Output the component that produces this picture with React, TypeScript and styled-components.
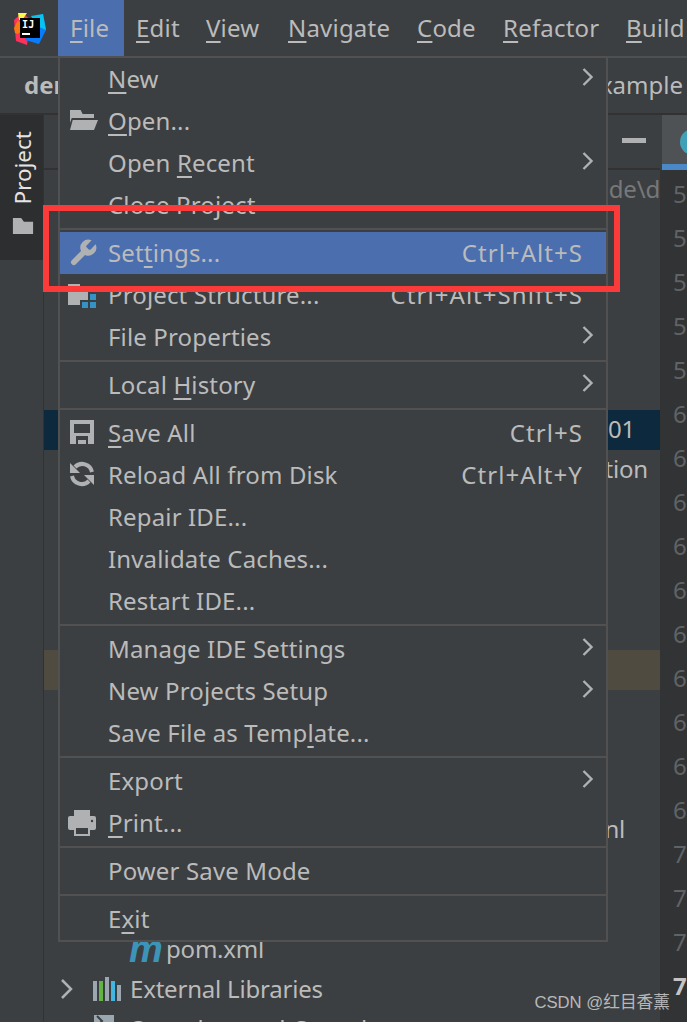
import React from "react";
import styled, { createGlobalStyle } from "styled-components";

const Global = createGlobalStyle`
  html, body { margin: 0; padding: 0; background: #3c3f41; }
  * { box-sizing: border-box; }
`;

const FONT = `"Noto Sans", "Open Sans", "Liberation Sans", sans-serif`;

const Page = styled.div`
  position: relative;
  width: 687px;
  height: 1022px;
  overflow: hidden;
  display: flex;
  flex-direction: column;
  background: #3c3f41;
  color: #bbbbbb;
  font-family: ${FONT};
  font-size: 24px;
`;

const MenuBar = styled.div`
  height: 58px;
  flex: none;
  display: flex;
  align-items: stretch;
  border-bottom: 2px solid #4d4f51;
  white-space: nowrap;
  letter-spacing: 0.2px;
`;

const LogoSlot = styled.div`
  width: 58px;
  flex: none;
  display: flex;
  align-items: flex-start;
  padding: 12px 0 0 13px;
`;

const TopItem = styled.div<{ $active?: boolean; $width: number }>`
  width: ${(p) => p.$width}px;
  flex: none;
  display: flex;
  align-items: center;
  padding: 0 0 1px 12px;
  background: ${(p) => (p.$active ? "#4b6eaf" : "transparent")};
`;

const Mnemonic = styled.span`
  text-decoration: underline;
  text-decoration-thickness: 2px;
  text-underline-offset: 4px;
  text-decoration-skip-ink: none;
`;

const NavBar = styled.div`
  height: 57px;
  flex: none;
  display: flex;
  align-items: center;
  justify-content: space-between;
  padding: 0 4px 3px 24px;
  border-bottom: 2px solid #323232;
  white-space: nowrap;
`;

const Crumb = styled.span<{ $bold?: boolean }>`
  font-weight: ${(p) => (p.$bold ? 700 : 400)};
`;

const Body = styled.div`
  flex: 1;
  min-height: 0;
  display: flex;
`;

const Stripe = styled.div`
  width: 44px;
  flex: none;
  border-right: 1px solid #323232;
`;

const ProjectTab = styled.div`
  height: 145px;
  background: #2c2e2f;
  display: flex;
  flex-direction: column-reverse;
  align-items: center;
  justify-content: flex-start;
  padding: 16px 0 26px 2px;
  gap: 13px;
  color: #e4e4e4;
`;

const VerticalLabel = styled.span`
  writing-mode: vertical-rl;
  transform: rotate(180deg);
  font-size: 22.5px;
  line-height: 24px;
`;

const TreePanel = styled.div`
  flex: 1;
  min-width: 0;
  display: flex;
  flex-direction: column;
`;

const PanelHeader = styled.div`
  height: 55px;
  flex: none;
  display: flex;
  align-items: center;
  justify-content: flex-end;
  padding: 0 14px 2px 0;
  border-bottom: 2px solid #323232;
`;

const MinimizeBar = styled.div`
  width: 24px;
  height: 5px;
  background: #afb1b3;
`;

const Tree = styled.div`
  flex: 1;
  min-height: 0;
  overflow: hidden;
  letter-spacing: -0.2px;
`;

const TreeRow = styled.div<{ $tone?: "selected" | "warm"; $pad?: number; $end?: number; $muted?: boolean }>`
  height: 40px;
  display: flex;
  align-items: center;
  white-space: nowrap;
  justify-content: ${(p) => (p.$end !== undefined ? "flex-end" : "flex-start")};
  padding-left: ${(p) => p.$pad ?? 0}px;
  padding-right: ${(p) => p.$end ?? 0}px;
  padding-bottom: 3px;
  color: ${(p) => (p.$muted ? "#787878" : "#bbbbbb")};
  background: ${(p) =>
    p.$tone === "selected" ? "#0d293e" : p.$tone === "warm" ? "#4f4b41" : "transparent"};
`;

const RowSpacer = styled.div<{ $rows: number }>`
  height: ${(p) => p.$rows * 40}px;
`;

const PomGlyph = styled.span`
  font-family: "Liberation Sans", sans-serif;
  font-weight: 700;
  font-style: italic;
  font-size: 38px;
  line-height: 40px;
  color: #3d94b8;
  width: 37px;
  flex: none;
`;

const TreeChevron = styled.svg`
  width: 13px;
  height: 22px;
  flex: none;
  margin-right: 20px;
`;

const TreeIcon = styled.svg`
  width: 28px;
  height: 28px;
  flex: none;
  margin-right: 9px;
`;

const EditorPane = styled.div`
  width: 27px;
  flex: none;
  display: flex;
  flex-direction: column;
  overflow: hidden;
`;

const FileTab = styled.div`
  height: 55px;
  flex: none;
  margin-left: 2px;
  background: #4e5254;
  border-bottom: 6px solid #4a88c7;
  overflow: hidden;
  padding: 14px 0 0 18px;
`;

const TabDot = styled.div`
  width: 26px;
  height: 26px;
  border-radius: 50%;
  background: #40a0b8;
`;

const Gutter = styled.div`
  flex: 1;
  min-height: 0;
  background: #313335;
  overflow: hidden;
  padding: 2px 0 0 13px;
`;

const LineNo = styled.div<{ $current?: boolean }>`
  height: 44px;
  line-height: 44px;
  color: ${(p) => (p.$current ? "#c4c4c4" : "#606366")};
  font-weight: ${(p) => (p.$current ? 700 : 400)};
`;

const Menu = styled.div`
  position: absolute;
  left: 58px;
  top: 56px;
  width: 550px;
  background: #3c3f41;
  border: 2px solid #515151;
  white-space: nowrap;
`;

const Item = styled.div<{ $selected?: boolean }>`
  height: 42px;
  display: flex;
  align-items: center;
  background: ${(p) => (p.$selected ? "#4b6eaf" : "transparent")};
`;

const IconSlot = styled.div`
  width: 48px;
  height: 32px;
  flex: none;
  padding-left: 7px;
`;

const IconSvg = styled.svg`
  display: block;
  width: 32px;
  height: 32px;
`;

const ItemText = styled.div`
  padding-bottom: 2px;
  letter-spacing: 0.15px;
`;

const Shortcut = styled.span`
  margin-left: auto;
  margin-right: 23px;
  padding-bottom: 2px;
  letter-spacing: 1.05px;
`;

const Arrow = styled.svg`
  margin-left: auto;
  margin-right: 12px;
  margin-bottom: 4px;
  width: 12px;
  height: 18px;
  flex: none;
`;

const Separator = styled.div`
  height: 6px;
  display: flex;
  align-items: center;
  &::before {
    content: "";
    width: 100%;
    height: 2px;
    background: #515151;
  }
`;

const Highlight = styled.div`
  position: absolute;
  left: 43px;
  top: 205px;
  width: 577px;
  height: 87px;
  border: 6px solid #fb3a3a;
  pointer-events: none;
`;

const Watermark = styled.div`
  position: absolute;
  right: 17px;
  top: 992px;
  font-family: "Liberation Sans", "Noto Sans CJK SC", sans-serif;
  font-size: 16.7px;
  line-height: 22px;
  color: #c6c6c6;
  opacity: 0.9;
  white-space: nowrap;
`;

const Label = ({ text }: { text: string }) => {
  const i = text.indexOf("_");
  if (i < 0) return <span>{text}</span>;
  return (
    <span>
      {text.slice(0, i)}
      <Mnemonic>{text[i + 1]}</Mnemonic>
      {text.slice(i + 2)}
    </span>
  );
};

const C = "#afb1b3";
const D = "#3c3f41";

const icons: Record<string, React.ReactNode> = {
  folder: (
    <>
      <path fill={C} d="M3 5h10.6l2 4H27v4H4.7L3 18z" />
      <path fill={C} d="M5.7 15H31l-4 10H3z" />
    </>
  ),
  wrench: (
    <g transform="scale(1.333)">
      <path
        fill={C}
        d="M14.7 6.3a1 1 0 0 0 0 1.4l1.6 1.6a1 1 0 0 0 1.4 0l3.77-3.77a6 6 0 0 1-7.94 7.94l-6.91 6.91a2.12 2.12 0 0 1-3-3l6.91-6.91a6 6 0 0 1 7.94-7.94l-3.76 3.76z"
      />
    </g>
  ),
  structure: (
    <>
      <path fill={C} d="M1 5h12v4h8v12h-8v5H1z" />
      <rect x="23" y="15" width="6" height="6" fill="#3592c4" />
      <rect x="15" y="23" width="6" height="6" fill="#3592c4" />
      <rect x="23" y="23" width="6" height="6" fill="#3592c4" />
    </>
  ),
  save: (
    <>
      <rect x="3" y="3" width="24" height="24" fill={C} />
      <rect x="7" y="7" width="16" height="9" fill={D} />
      <rect x="9" y="19" width="12" height="8" fill={D} />
      <rect x="11" y="23" width="8" height="4" fill={C} />
    </>
  ),
  reload: (
    <>
      <path fill="none" stroke={C} strokeWidth="4" d="M25 13A10 10 0 0 0 8 8" />
      <path fill={C} d="M3 4v10h10z" />
      <path fill="none" stroke={C} strokeWidth="4" d="M5 17a10 10 0 0 0 17 5" />
      <path fill={C} d="M27 26V16H17z" />
    </>
  ),
  print: (
    <>
      <rect x="7" y="3" width="16" height="6" fill={C} />
      <rect x="1" y="9" width="28" height="14" rx="2" fill={C} />
      <rect x="7" y="19" width="16" height="10" fill={C} />
      <rect x="9" y="21" width="12" height="6" fill={D} />
      <circle cx="25" cy="14" r="1.2" fill={D} />
    </>
  ),
};

type Entry =
  | "sep"
  | { label: string; icon?: string; shortcut?: string; sub?: boolean; selected?: boolean };

const entries: Entry[] = [
  { label: "_New", sub: true },
  { label: "_Open...", icon: "folder" },
  { label: "Open _Recent", sub: true },
  { label: "Close Project" },
  "sep",
  { label: "Set_tings...", icon: "wrench", shortcut: "Ctrl+Alt+S", selected: true },
  { label: "Project Structure...", icon: "structure", shortcut: "Ctrl+Alt+Shift+S" },
  { label: "File Properties", sub: true },
  "sep",
  { label: "Local _History", sub: true },
  "sep",
  { label: "_Save All", icon: "save", shortcut: "Ctrl+S" },
  { label: "Reload All from Disk", icon: "reload", shortcut: "Ctrl+Alt+Y" },
  { label: "Repair IDE..." },
  { label: "Invalidate Caches..." },
  { label: "Restart IDE..." },
  "sep",
  { label: "Manage IDE Settings", sub: true },
  { label: "New Projects Setup", sub: true },
  { label: "Save File as Temp_late..." },
  "sep",
  { label: "Export", sub: true },
  { label: "_Print...", icon: "print" },
  "sep",
  { label: "Power Save Mode" },
  "sep",
  { label: "E_xit" },
];

const top: { label: string; width: number; active?: boolean }[] = [
  { label: "_File", width: 66, active: true },
  { label: "_Edit", width: 70 },
  { label: "_View", width: 82 },
  { label: "_Navigate", width: 129 },
  { label: "_Code", width: 86 },
  { label: "_Refactor", width: 123 },
  { label: "_Build", width: 73 },
];

const lines = [
  ...Array(5).fill("5"),
  ...Array(10).fill("6"),
  ...Array(5).fill("7"),
];

const Logo = () => (
  <svg width="34" height="34" viewBox="0 0 34 34">
    <path fill="#fe315d" d="M1 8 9 1l8 6-3 26-11-4z" />
    <path fill="#f97a12" d="M1 16 5 8l6 8-6 6-3-1z" />
    <path fill="#fcf84a" d="M5 1h9l-4 6-4 1z" />
    <path fill="#087cfa" d="M16 8l14-6 3 16-7 14-14-4z" />
    <path fill="#07c3f2" d="M18 4l12-2 3 16-9-4z" />
    <rect x="7" y="6" width="20" height="20" fill="#000" />
    <text x="9" y="16" fill="#fff" fontFamily="'DejaVu Sans Mono', monospace" fontWeight="700" fontSize="10">
      IJ
    </text>
    <rect x="9" y="21" width="8" height="2" fill="#fff" />
  </svg>
);

export default function App() {
  return (
    <>
      <Global />
      <Page>
        <MenuBar>
          <LogoSlot>
            <Logo />
          </LogoSlot>
          {top.map((t) => (
            <TopItem key={t.label} $active={t.active} $width={t.width}>
              <Label text={t.label} />
            </TopItem>
          ))}
        </MenuBar>
        <NavBar>
          <Crumb $bold>demo</Crumb>
          <Crumb>xample</Crumb>
        </NavBar>
        <Body>
          <Stripe>
            <ProjectTab>
              <svg width="22" height="18" viewBox="0 0 22 18">
                <path fill={C} d="M0 0h9l3 4h10v14H0z" />
              </svg>
              <VerticalLabel>Project</VerticalLabel>
            </ProjectTab>
          </Stripe>
          <TreePanel>
            <PanelHeader>
              <MinimizeBar />
            </PanelHeader>
            <Tree>
              <TreeRow $muted $end={0}>
                de\d
              </TreeRow>
              <RowSpacer $rows={5} />
              <TreeRow $tone="selected" $end={25}>
                01
              </TreeRow>
              <TreeRow $end={12}>tion</TreeRow>
              <RowSpacer $rows={4} />
              <TreeRow $tone="warm" />
              <RowSpacer $rows={3} />
              <TreeRow $end={35}>nl</TreeRow>
              <RowSpacer $rows={2} />
              <TreeRow $pad={85}>
                <PomGlyph>m</PomGlyph>
                pom.xml
              </TreeRow>
              <TreeRow $pad={16}>
                <TreeChevron viewBox="0 0 13 22">
                  <path fill="none" stroke={C} strokeWidth="2.5" d="M2 2l9 9-9 9" />
                </TreeChevron>
                <TreeIcon viewBox="0 0 28 28">
                  <rect x="0" y="6" width="4" height="20" fill="#9aa7b0" />
                  <rect x="6" y="6" width="4" height="20" fill="#62b543" />
                  <rect x="12" y="2" width="4" height="24" fill="#9aa7b0" />
                  <rect x="18" y="6" width="4" height="20" fill="#40b6e0" />
                  <rect x="24" y="10" width="4" height="16" fill="#9aa7b0" />
                </TreeIcon>
                External Libraries
              </TreeRow>
              <TreeRow $pad={50}>
                <TreeIcon viewBox="0 0 28 28">
                  <rect x="0" y="0" width="20" height="24" fill="#9aa7b0" />
                  <path fill="none" stroke="#3c3f41" strokeWidth="2" d="M3 1l5 5-5 5" />
                </TreeIcon>
                Scratches and Consoles
              </TreeRow>
            </Tree>
          </TreePanel>
          <EditorPane>
            <FileTab>
              <TabDot />
            </FileTab>
            <Gutter>
              {lines.map((n, i) => (
                <LineNo key={i} $current={i === 18}>
                  {n}
                </LineNo>
              ))}
            </Gutter>
          </EditorPane>
        </Body>

        <Menu>
          {entries.map((e, i) =>
            e === "sep" ? (
              <Separator key={i} />
            ) : (
              <Item key={i} $selected={e.selected}>
                <IconSlot>
                  {e.icon && <IconSvg viewBox="0 0 32 32">{icons[e.icon]}</IconSvg>}
                </IconSlot>
                <ItemText>
                  <Label text={e.label} />
                </ItemText>
                {e.shortcut && <Shortcut>{e.shortcut}</Shortcut>}
                {e.sub && (
                  <Arrow viewBox="0 0 12 18">
                    <path fill="none" stroke={C} strokeWidth="2.4" d="M1.5 1l8 8-8 8" />
                  </Arrow>
                )}
              </Item>
            )
          )}
        </Menu>
        <Highlight />
        <Watermark>CSDN @红目香薰</Watermark>
      </Page>
    </>
  );
}
